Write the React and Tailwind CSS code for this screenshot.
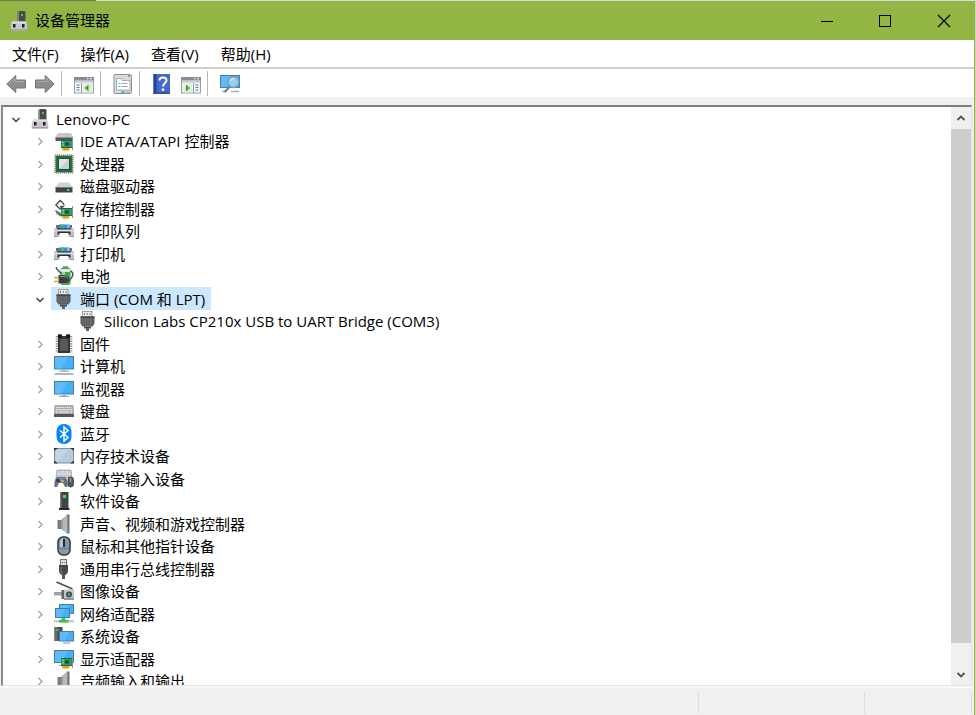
import { useState } from 'react';

const devices = [
	{ label: 'Lenovo-PC', level: 0, icon: ComputerIcon, open: true },
	{ label: 'IDE ATA/ATAPI 控制器', level: 1, icon: IdeIcon },
	{ label: '处理器', level: 1, icon: CpuIcon },
	{ label: '磁盘驱动器', level: 1, icon: DiskIcon },
	{ label: '存储控制器', level: 1, icon: StorageIcon },
	{ label: '打印队列', level: 1, icon: PrinterIcon },
	{ label: '打印机', level: 1, icon: PrinterIcon },
	{ label: '电池', level: 1, icon: BatteryIcon },
	{ label: '端口 (COM 和 LPT)', level: 1, icon: PortIcon, open: true },
	{ label: 'Silicon Labs CP210x USB to UART Bridge (COM3)', level: 2, icon: PortIcon, leaf: true },
	{ label: '固件', level: 1, icon: FirmwareIcon },
	{ label: '计算机', level: 1, icon: DesktopIcon },
	{ label: '监视器', level: 1, icon: MonitorIcon },
	{ label: '键盘', level: 1, icon: KeyboardIcon },
	{ label: '蓝牙', level: 1, icon: BluetoothIcon },
	{ label: '内存技术设备', level: 1, icon: MemoryIcon },
	{ label: '人体学输入设备', level: 1, icon: HidIcon },
	{ label: '软件设备', level: 1, icon: SoftwareIcon },
	{ label: '声音、视频和游戏控制器', level: 1, icon: SpeakerIcon },
	{ label: '鼠标和其他指针设备', level: 1, icon: MouseIcon },
	{ label: '通用串行总线控制器', level: 1, icon: UsbIcon },
	{ label: '图像设备', level: 1, icon: CameraIcon },
	{ label: '网络适配器', level: 1, icon: NetworkIcon },
	{ label: '系统设备', level: 1, icon: SystemIcon },
	{ label: '显示适配器', level: 1, icon: DisplayIcon },
	{ label: '音频输入和输出', level: 1, icon: SpeakerIcon },
];

const indents = ['pl-[2px]', 'pl-[26px]', 'pl-[50px]'];

const menus = ['文件(F)', '操作(A)', '查看(V)', '帮助(H)'];

const toolbar = [
	[
		{ name: '后退', icon: BackIcon },
		{ name: '前进', icon: ForwardIcon },
	],
	[{ name: '显示/隐藏控制台树', icon: ConsoleTreeIcon }],
	[{ name: '属性', icon: PropertiesIcon }],
	[
		{ name: '帮助', icon: HelpIcon },
		{ name: '显示/隐藏操作窗格', icon: ActionPaneIcon },
	],
	[{ name: '扫描检测硬件改动', icon: ScanIcon }],
];

export default function App() {
	const [selected, setSelected] = useState(8);

	return (
		<div className="flex flex-col h-screen pr-px bg-[#cfd3c4] font-['Open_Sans','Noto_Sans_CJK_SC',sans-serif] text-[15px] leading-5 text-black">
			<div className="h-px bg-[#d9dcd6]">
				<div className="w-24 h-px bg-[#6f7a5c]"></div>
			</div>
			<div className="flex flex-col flex-1 min-h-0 bg-[#f0f0f0] border-r border-[#92b544]">
				<TitleBar />
				<nav className="flex items-center h-[29px] pl-px bg-white border-b-2 border-[#cfcfcf]">
					{menus.map((menu) => (
						<button key={menu} className="px-[11px] whitespace-nowrap">
							{menu}
						</button>
					))}
				</nav>
				<div className="flex items-center h-7 pt-px pl-[6px] bg-white">
					{toolbar.map((group, i) => (
						<div key={i} className="flex items-center">
							{i > 0 && <div className="w-px h-[25px] mx-[6px] bg-[#b8b8b8]"></div>}
							<div className={`flex gap-[9px] ${i > 0 ? 'px-[6px] pr-0' : ''}`}>
								{group.map(({ name, icon: Icon }) => (
									<button key={name} aria-label={name}>
										<Icon />
									</button>
								))}
							</div>
						</div>
					))}
				</div>
				<div className="flex flex-1 min-h-0 mt-2 ml-px mr-[2px] bg-white border-t-2 border-l-2 border-r border-b border-t-[#7d7d7d] border-l-[#8a8a8a] border-r-[#e3e3e3] border-b-[#e3e3e3]">
					<ul role="tree" className="flex-1 min-w-0 overflow-hidden">
						{devices.map((device, i) => (
							<DeviceRow
								key={device.label}
								device={device}
								selected={selected === i}
								onSelect={() => setSelected(i)}
							/>
						))}
					</ul>
					<ScrollBar />
				</div>
				<footer className="flex h-[29px] pt-1 pb-px mr-[2px] border-t-2 border-[#f9f9f9]">
					<div className="flex-1 border-r border-[#dcdcdc]"></div>
					<div className="w-[166px] border-r border-[#dcdcdc]"></div>
					<div className="w-[107px] border-r border-[#dcdcdc]"></div>
				</footer>
			</div>
		</div>
	);
}

function TitleBar() {
	return (
		<header className="flex items-center h-[39px] pl-[9px] bg-[#92b544]">
			<ComputerIcon />
			<h1 className="flex-1 pl-[6px] pb-px">设备管理器</h1>
			<button aria-label="最小化" className="flex justify-center w-[58px]">
				<svg width="14" height="14" stroke="#000" fill="none">
					<path d="M1 7.5h12" />
				</svg>
			</button>
			<button aria-label="最大化" className="flex justify-center w-[58px]">
				<svg width="14" height="14" stroke="#000" fill="none">
					<rect x="1.5" y="1.5" width="11" height="11" />
				</svg>
			</button>
			<button aria-label="关闭" className="flex justify-center w-[60px]">
				<svg width="14" height="14" stroke="#000" strokeWidth="1.1" fill="none">
					<path d="M1 1l12 12M13 1L1 13" />
				</svg>
			</button>
		</header>
	);
}

// rows alternate between 22 and 23 pixels
function DeviceRow({ device, selected, onSelect }) {
	const { label, level, icon: Icon, open, leaf } = device;

	return (
		<li
			role="treeitem"
			aria-selected={selected}
			className={`flex items-stretch h-[23px] even:h-[22px] ${indents[level]}`}
		>
			<div className="flex items-center justify-center w-[22px]">
				{!leaf && (
					<button aria-label={open ? '折叠' : '展开'}>
						<svg width="10" height="10" fill="none">
							{open ? (
								<path d="M1.5 4L5 7.5 8.5 4" stroke="#404040" strokeWidth="1.5" />
							) : (
								<path d="M3.5 2L7 5.5 3.5 9" stroke="#a0a0a0" strokeWidth="1.3" />
							)}
						</svg>
					</button>
				)}
			</div>
			<button
				className={`flex items-center gap-[6px] pl-[3px] pr-[6px] whitespace-nowrap ${
					selected ? 'bg-[#cce8ff]' : ''
				}`}
				onClick={onSelect}
			>
				<Icon />
				<span>{label}</span>
			</button>
		</li>
	);
}

function ScrollBar() {
	return (
		<div className="flex flex-col w-5 bg-[#f0f0f0]">
			<button aria-label="向上滚动" className="flex items-center justify-center h-[22px]">
				<svg width="10" height="10" fill="none" stroke="#505050" strokeWidth="1.8">
					<path d="M1.5 7L5 3.5 8.5 7" />
				</svg>
			</button>
			<div className="flex-1">
				<div className="h-[96%] bg-[#cdcdcd]"></div>
			</div>
			<button aria-label="向下滚动" className="flex items-center justify-center h-[21px]">
				<svg width="10" height="10" fill="none" stroke="#505050" strokeWidth="1.8">
					<path d="M1.5 3L5 6.5 8.5 3" />
				</svg>
			</button>
		</div>
	);
}

function Icon({ children }) {
	return (
		<svg
			xmlns="http://www.w3.org/2000/svg"
			viewBox="0 0 20 20"
			className="w-5 h-5 shrink-0"
			fill="none"
			aria-hidden="true"
		>
			{children}
		</svg>
	);
}

function ComputerIcon() {
	return (
		<Icon>
			<path d="M10 0h5.5l1 1v10h-8V1z" fill="#4a4a4a" />
			<path d="M8.5 1L10 0v11H8.500z" fill="#8a8a8a" />
			<rect x="12" y="3" width="2" height="2" fill="#2fd13c" />
			<path d="M3 10.5h14l1.2 4v5H1.800v-5z" fill="#c9c9cc" />
			<path d="M3 10.500h14l.6 2H2.400z" fill="#dededf" />
			<rect x="1.800" y="18" width="16.400" height="1.500" fill="#a2a2a6" />
			<rect x="4" y="13" width="2.500" height="3.500" fill="#222" />
			<rect x="13" y="13" width="2.500" height="3.500" fill="#222" />
		</Icon>
	);
}

function Card() {
	return (
		<>
			<rect x="7" y="9" width="11" height="8" fill="#2f9a62" />
			<path d="M7 9h11v1H7zM7 16h11v1H7z" fill="#1c6b40" />
			<rect x="11" y="11.5" width="4" height="3" fill="#164f35" />
			<path d="M8.5 11.5H10M8.5 14H10" stroke="#a8e6b8" />
			<path d="M18.5 7v12" stroke="#8b9299" />
			<rect x="8" y="17" width="7.5" height="2.5" fill="#f5a623" />
			<path d="M10.5 17v2.5M13 17v2.5" stroke="#d67f10" strokeWidth=".6" />
		</>
	);
}

function IdeIcon() {
	return (
		<Icon>
			<path d="M4 2h13l2 4H1.5z" fill="#c6c8ca" />
			<path d="M1.5 6H19v4H1.5z" fill="#55585b" />
			<path d="M1.5 6H19v1H1.5z" fill="#8d9093" />
			<Card />
		</Icon>
	);
}

function CpuIcon() {
	return (
		<Icon>
			<rect x="1" y="1" width="18" height="18" stroke="#b99a50" strokeWidth="1.6" strokeDasharray="1 1" />
			<rect x="1.500" y="1.500" width="17" height="17" fill="#2b6b4d" />
			<rect x="5" y="5" width="10" height="10" fill="#c9cfcd" />
			<path d="M5 5h10L5 15z" fill="#e0e5e3" />
			<rect x="4.500" y="4.500" width="11" height="11" stroke="#1d4f38" />
		</Icon>
	);
}

function DiskIcon() {
	return (
		<Icon>
			<path d="M4.500 6.500h11l3 5h-17z" fill="#cfd1d3" />
			<rect x="1.500" y="11" width="17" height="5.500" rx=".5" fill="#404346" />
			<path d="M1.500 11.500h17" stroke="#777" />
			<rect x="13" y="13" width="2.500" height="2" fill="#35d94a" />
		</Icon>
	);
}

function StorageIcon() {
	return (
		<Icon>
			<path d="M9 4L6 1.500 2 6l4 4 3-2.500H6M9 4l1 2" stroke="#55585b" strokeWidth="1.600" />
			<path d="M2 12l5 1v5l-5-3z" fill="#a6aaad" />
			<path d="M1.500 11.500l6 5.500" stroke="#555" strokeWidth="1.400" />
			<Card />
		</Icon>
	);
}

function PrinterIcon() {
	return (
		<Icon>
			<path d="M2 4h16v3H2z" fill="#6b7074" />
			<path d="M5 3.500h10.500V8H5z" fill="#2b8de0" />
			<path d="M7 3.500h3.500V7H7z" fill="#30bf74" />
			<path d="M13 3.500h2.500V7H13z" fill="#7cc4ee" />
			<path d="M1 7h18l1 2v6.500H0V9z" fill="#bcc2c6" />
			<path d="M3 7h14v1.500H3z" fill="#4a5054" />
			<path d="M.5 9h19v1.500H.5z" fill="#dfe3e5" />
			<rect x="3.500" y="10.500" width="13" height="3" fill="#2c3033" />
			<path d="M5.500 12h9v4.500h-9z" fill="#fdfdfd" />
			<path d="M0 15.500h4.500M15.500 15.500H20" stroke="#8b9195" />
		</Icon>
	);
}

function BatteryIcon() {
	return (
		<Icon>
			<path d="M15 5c4 0 4.500 3 3 6-1 2-2 2-2 4" stroke="#4d5154" strokeWidth="1.500" />
			<rect x="9" y="0" width="5" height="2" fill="#999" />
			<rect x="6.500" y="1.500" width="10" height="17.500" rx="2.500" fill="#3fa64a" />
			<path d="M8 3h3v15H8z" fill="#8cdd92" />
			<path d="M7 3h9v3H7z" fill="#dfe8e0" />
			<path d="M2 1c1 4 4 4 5 7" stroke="#56595c" strokeWidth="1.400" />
			<path d="M4.500 9h4c4 0 7 1.500 7 4.500s-3 4-7 4h-4z" fill="#3c3f42" />
			<path d="M6 10.500h4c2 0 3.500 1 4 2" stroke="#909497" />
			<path d="M0 11.500h4.500M0 15.500h4.500" stroke="#d7a33e" strokeWidth="1.500" />
		</Icon>
	);
}

function PortIcon() {
	return (
		<Icon>
			<rect x="4.500" y=".5" width="9.500" height="5" fill="#ececec" stroke="#9b9b9b" />
			<path d="M6.500 2v2M9.200 2v2M12 2v2" stroke="#777" />
			<path d="M2.500 5.500h14v7l-2 3h-10l-2-3z" fill="#5c5e60" />
			<path d="M5 7v7M7.500 7v7M10 7v7M12.500 7v7" stroke="#77797b" strokeWidth=".8" />
			<path d="M2.500 5.500h14V7h-14z" fill="#48494b" />
			<path d="M6 15.500h7v2H6z" fill="#46484a" />
			<path d="M8 17h3v3H8z" fill="#606264" />
		</Icon>
	);
}

function FirmwareIcon() {
	return (
		<Icon>
			<path d="M3.500 2v17M16.500 2v17" stroke="#8b8b8b" strokeWidth="3.500" strokeDasharray="1.200 1.200" />
			<path d="M4 .5h3.500c0 2 5 2 5 0H16v18.500H4z" fill="#343536" />
			<path d="M6 5h8v12H6z" fill="#56585a" />
			<path d="M4 .5h3.500V4H4zM12.500.5H16V4h-3.500z" fill="#191919" />
		</Icon>
	);
}

function Screen({ x, y, w, h }) {
	return (
		<>
			<rect x={x} y={y} width={w} height={h} fill="#45affa" stroke="#4a7c9f" />
			<path d={`M${x + 0.5} ${y + 0.5}h${w * 0.65}l-${w * 0.3} ${h - 1}h-${w * 0.35}z`} fill="#5dbbfa" />
		</>
	);
}

function DesktopIcon() {
	return (
		<Icon>
			<Screen x={0.5} y={0.5} w={19} h={12.5} />
			<path d="M8 13.500h4v1.500H8z" fill="#b7c3ce" />
			<path d="M5 15.200h10" stroke="#8d9eae" />
			<path d="M1.500 17h17l1.500 2H0z" fill="#a9b8c8" />
		</Icon>
	);
}

function MonitorIcon() {
	return (
		<Icon>
			<Screen x={0.5} y={2.5} w={19} h={12.5} />
			<path d="M8 15.500h4V17H8z" fill="#aab8c4" />
			<path d="M5 17.300h10" stroke="#8295a5" />
		</Icon>
	);
}

function KeyboardIcon() {
	return (
		<Icon>
			<path d="M.5 4h19l.5 9H0z" fill="#a9adb1" />
			<path d="M0 13h20v3H0z" fill="#54595e" />
			<path d="M2.500 6.500h15M2 8.700h16" stroke="#f5f5f5" strokeDasharray="1.300 .8" strokeWidth="1.200" />
			<path d="M2 11h2M5 11h10M16 11h2" stroke="#f5f5f5" strokeWidth="1.200" />
		</Icon>
	);
}

function BluetoothIcon() {
	return (
		<Icon>
			<rect x="2.500" y="0" width="15" height="20" rx="7" fill="#0a84f6" />
			<path d="M6 6.500l8 7-4 3.500V3l4 3.500-8 7" stroke="#fff" strokeWidth="1.500" />
		</Icon>
	);
}

function MemoryIcon() {
	return (
		<Icon>
			<rect x=".5" y="2.500" width="19" height="14.500" rx="1.500" fill="#b4cbdc" stroke="#8194a3" />
			<path d="M2 4h12L4 15.500H2z" fill="#c3d7e5" />
			<path d="M0 5V2h4zM16 2h4v3zM0 14.500v3h4zM20 14.500v3h-4z" fill="#303439" />
		</Icon>
	);
}

function HidIcon() {
	return (
		<Icon>
			<path d="M3 1h14l1 8H2z" fill="#bfc4c8" stroke="#9a9fa4" strokeWidth=".7" />
			<path d="M4 3h12M3.500 5.200h13" stroke="#fff" strokeWidth="1.200" strokeDasharray="1.300 1" />
			<path d="M3 8h8c2.500 2 3 6 2.500 10H11l-2-4H5l-2 4H.5C0 14 .5 10 3 8z" fill="#6c7378" />
			<rect x="2.500" y="10" width="3" height="3" fill="#313539" />
			<path d="M6 7.500l3 3-2 2-2-2z" fill="#2b9bf4" />
			<circle cx="9.500" cy="9" r="1.200" fill="#ef5a45" />
			<circle cx="8.500" cy="12" r="1.200" fill="#f4c23c" />
			<rect x="14" y="8" width="5.500" height="10" rx="2.700" fill="#535c64" stroke="#33393e" strokeWidth=".8" />
			<path d="M16.700 9v4" stroke="#aab4bb" />
		</Icon>
	);
}

function SoftwareIcon() {
	return (
		<Icon>
			<path d="M6 1h8.500v16H6z" fill="#414344" />
			<path d="M6 1h1.500v16H6z" fill="#77797a" />
			<rect x="9" y="4" width="3" height="3" fill="#39e04b" />
			<path d="M5 17h10.500v2H5z" fill="#26292b" />
		</Icon>
	);
}

function SpeakerIcon() {
	return (
		<Icon>
			<path d="M3.500 6h4v9h-4z" fill="#777d82" />
			<path d="M7 6l6-5v18l-6-4z" fill="#979da2" />
			<path d="M9 5l4-4v18l-4-3z" fill="#b5babe" />
			<path d="M12.500.5h3v19h-3z" fill="#70767b" />
			<path d="M12.800 1v18" stroke="#d2d6d9" strokeWidth=".8" />
		</Icon>
	);
}

function MouseIcon() {
	return (
		<Icon>
			<rect x="4" y="1" width="12" height="18" rx="5" fill="#8799a9" stroke="#30363c" strokeWidth="1.500" />
			<path d="M6 7c0-3 1.500-4.500 3-5v9H6z" fill="#b6c3ce" />
			<path d="M10 3v8" stroke="#232a30" strokeWidth="2" />
			<path d="M5 12c3 1 7 1 10 0" stroke="#65788a" />
		</Icon>
	);
}

function UsbIcon() {
	return (
		<Icon>
			<rect x="6.500" y=".5" width="6" height="6" fill="#dedede" stroke="#777" />
			<path d="M8 3.500h1M10.500 3.500h1" stroke="#555" />
			<path d="M5 6h9v5.500c0 2.500-1.500 4-3 4.500H8c-1.500-.5-3-2-3-4.500z" fill="#45474a" />
			<path d="M7 8v4l1.500 3" stroke="#7d8084" />
			<path d="M8 16h3v4H8z" fill="#55575a" />
		</Icon>
	);
}

function CameraIcon() {
	return (
		<Icon>
			<path d="M2.500 1l16 7" stroke="#4e5153" strokeWidth="1.800" />
			<path d="M0 11h8v3.500H0z" fill="#9fa3a6" />
			<path d="M7.500 9h4v9h-4z" fill="#5f6366" />
			<path d="M10 8.500h10V19H10z" fill="#c2c5c7" />
			<path d="M10 17h10v2H10z" fill="#929598" />
			<circle cx="15" cy="13.500" r="3" fill="#424a4d" />
			<circle cx="15" cy="13.500" r="1.200" fill="#4db4a6" />
		</Icon>
	);
}

function NetworkIcon() {
	return (
		<Icon>
			<Screen x={5.5} y={0.5} w={14} h={9} />
			<Screen x={1.5} y={4.5} w={14} h={9} />
			<path d="M0 17.200h20" stroke="#c9cdd0" strokeWidth="2.500" />
			<path d="M8 14h3l1 2.500H7z" fill="#3cc451" />
			<path d="M5 16h9.500v2.500H5z" fill="#3cbf50" />
		</Icon>
	);
}

function SystemIcon() {
	return (
		<Icon>
			<path d="M.5 1h8v14h-8z" fill="#484b4e" />
			<path d="M.5 1h3v14h-3z" fill="#686c70" />
			<rect x="2.500" y="3" width="2" height="2" fill="#39d94b" />
			<Screen x={5.5} y={5.5} w={14} h={9.5} />
			<path d="M9 17h7" stroke="#9aabb8" strokeWidth="1.300" />
		</Icon>
	);
}

function DisplayIcon() {
	return (
		<Icon>
			<Screen x={0.5} y={1.5} w={19} h={12} />
			<path d="M5 16.500h4" stroke="#9aabb8" />
			<Card />
		</Icon>
	);
}

function BackIcon() {
	return (
		<Icon>
			<path d="M.8 10l9-8.500V6H19.500v8H9.800v4.500z" fill="#8e8e8e" stroke="#757575" />
			<path d="M3 9.500l5.800-5.500V7.500H18.500" stroke="#ababab" />
		</Icon>
	);
}

function ForwardIcon() {
	return (
		<Icon>
			<path d="M19.200 10l-9-8.500V6H.5v8h9.700v4.500z" fill="#8e8e8e" stroke="#757575" />
			<path d="M1.500 7.500h9.700V4l5.800 5.500" stroke="#ababab" />
		</Icon>
	);
}

function PaneFrame() {
	return (
		<>
			<rect x=".5" y="3.500" width="19" height="15.500" fill="#f4f4f4" stroke="#9a9fa5" />
			<path d="M0 3h20v3.500H0z" fill="#858d98" />
			<path d="M13 4.700h1.500M16 4.700h2" stroke="#fff" />
			<path d="M1 7.800h18" stroke="#c4cad2" strokeWidth="1.500" />
		</>
	);
}

function ConsoleTreeIcon() {
	return (
		<Icon>
			<PaneFrame />
			<path d="M7.500 9v10" stroke="#9a9fa5" />
			<path d="M2.500 11h3M2.500 13.500h3M2.500 16h3" stroke="#4d83bd" />
			<rect x="9" y="9.500" width="9" height="9" fill="#e3eddc" />
			<path d="M14.500 10.500v7L10.500 14z" fill="#37a829" />
		</Icon>
	);
}

function ActionPaneIcon() {
	return (
		<Icon>
			<PaneFrame />
			<path d="M12.500 9v10" stroke="#9a9fa5" />
			<path d="M14.500 11h3M14.500 13.500h3M14.500 16h3" stroke="#4d83bd" />
			<rect x="2" y="9.500" width="9" height="9" fill="#e3eddc" />
			<path d="M5 10.500v7L9 14z" fill="#37a829" />
		</Icon>
	);
}

function PropertiesIcon() {
	return (
		<Icon>
			<rect x="1" y=".5" width="17.500" height="19" rx="1" fill="#d8dbde" stroke="#8d9196" />
			<path d="M15 2h2" stroke="#555" />
			<path d="M3.500 4.500H9v2h8v9.500H3.500z" fill="#fff" stroke="#a7adb3" />
			<path d="M5.500 9.500h2M5.500 12.500h2" stroke="#3fb0dc" />
			<path d="M8.500 9.500h6M8.500 12.500h6" stroke="#9aa0a6" />
			<path d="M8 18h4" stroke="#33b5e0" strokeWidth="1.600" />
			<path d="M13 18h4" stroke="#9aa0a6" />
		</Icon>
	);
}

function HelpIcon() {
	return (
		<Icon>
			<rect x="1.500" y="0" width="16.500" height="20" fill="#4468cc" />
			<path d="M1.500 0h3v20h-3z" fill="#274299" />
			<path d="M1.500 18.500H18V20H1.500z" fill="#2c4aa5" />
			<path d="M7.500 6.500c0-4 7-4 7-.3 0 2.600-3.500 3-3.500 6.300" stroke="#fff" strokeWidth="2" />
			<rect x="9.800" y="14.500" width="2.400" height="2.400" fill="#fff" />
		</Icon>
	);
}

function ScanIcon() {
	return (
		<Icon>
			<Screen x={0.5} y={1.5} w={19} h={12} />
			<path d="M2 17.500h5M11 17.500h8" stroke="#9fb1bd" strokeWidth="1.500" />
			<path d="M10 12.500L4.500 18" stroke="#747e88" strokeWidth="2" />
			<circle cx="13.500" cy="8" r="5.500" fill="#8fd2f5" stroke="#7c98aa" strokeWidth="1.400" />
			<path d="M10.500 7c.5-1.500 2-2.500 3.500-2.300" stroke="#d4efff" strokeWidth="1.200" />
		</Icon>
	);
}
